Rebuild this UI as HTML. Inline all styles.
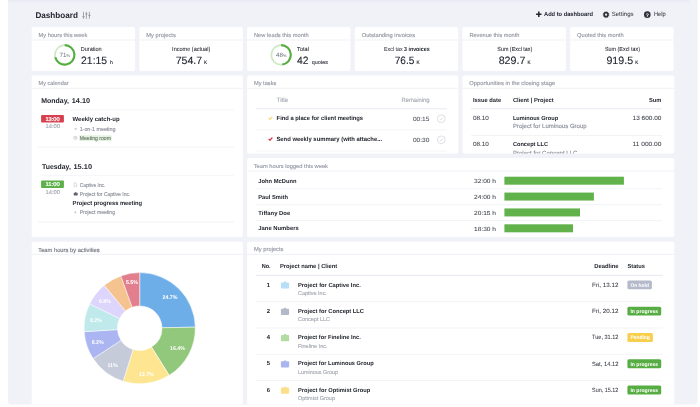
<!DOCTYPE html>
<html lang="en"><head><meta charset="utf-8"><title>Dashboard</title>
<style>
html,body{margin:0;padding:0;background:#fff;}
body{width:700px;height:407px;overflow:hidden;}
svg{display:block;font-family:"Liberation Sans", Arial, sans-serif;filter:blur(0.35px);}
text{white-space:pre;}
</style></head><body>
<svg width="700" height="407" viewBox="0 0 700 407" text-rendering="geometricPrecision">
<rect x="0" y="0" width="700" height="407" fill="#ffffff"/>
<path d="M8 0H697.5V401.5a3 3 0 0 1-3 3H11a3 3 0 0 1-3-3Z" fill="#f1f2f8"/>
<rect x="8" y="0" width="681" height="2.2" fill="#eaecf3"/>
<text x="35.40" y="17.90" font-size="8.3" font-weight="700" fill="#23262f" textLength="42.60" lengthAdjust="spacingAndGlyphs" >Dashboard</text>
<line x1="83.5" y1="11.8" x2="83.5" y2="18.8" stroke="#8f929c" stroke-width="0.8"/>
<line x1="82.4" y1="16.6" x2="84.6" y2="16.6" stroke="#8f929c" stroke-width="0.9"/>
<line x1="86.4" y1="11.8" x2="86.4" y2="18.8" stroke="#8f929c" stroke-width="0.8"/>
<line x1="85.30000000000001" y1="14.0" x2="87.5" y2="14.0" stroke="#8f929c" stroke-width="0.9"/>
<line x1="89.4" y1="11.8" x2="89.4" y2="18.8" stroke="#8f929c" stroke-width="0.8"/>
<line x1="88.30000000000001" y1="15.4" x2="90.5" y2="15.4" stroke="#8f929c" stroke-width="0.9"/>
<path d="M536.1 14.3H541.5M538.8 11.6V17" stroke="#23262f" stroke-width="1.5" fill="none"/>
<text x="544.00" y="16.40" font-size="6.0" font-weight="700" fill="#23262f" textLength="48.90" lengthAdjust="spacingAndGlyphs" >Add to dashboard</text>
<circle cx="606.05" cy="14.65" r="1.95" fill="none" stroke="#2f323b" stroke-width="1.7"/>
<circle cx="606.05" cy="14.65" r="2.9" fill="none" stroke="#2f323b" stroke-width="0.6" stroke-dasharray="1.14 1.14"/>
<text x="611.70" y="16.40" font-size="6.1" font-weight="400" fill="#3d4049" textLength="21.90" lengthAdjust="spacingAndGlyphs"  stroke="#3d4049" stroke-width="0.05">Settings</text>
<circle cx="647.3" cy="14.65" r="3.3" fill="#2f323b"/>
<text x="647.30" y="16.50" font-size="5.2" font-weight="700" fill="#ffffff" text-anchor="middle" >?</text>
<text x="653.90" y="16.40" font-size="6.1" font-weight="400" fill="#3d4049" textLength="11.80" lengthAdjust="spacingAndGlyphs"  stroke="#3d4049" stroke-width="0.05">Help</text>
<rect x="31.70" y="27.00" width="103.40" height="44.00" rx="2" fill="#ffffff" />
<line x1="31.70" y1="40.00" x2="135.10" y2="40.00" stroke="#e9ebf2" stroke-width="0.7"/>
<text x="38.60" y="36.90" font-size="5.7" font-weight="400" fill="#9396a1" textLength="48.80" lengthAdjust="spacingAndGlyphs"  stroke="#9396a1" stroke-width="0.13">My hours this week</text>
<rect x="139.40" y="27.00" width="103.40" height="44.00" rx="2" fill="#ffffff" />
<line x1="139.40" y1="40.00" x2="242.80" y2="40.00" stroke="#e9ebf2" stroke-width="0.7"/>
<text x="146.30" y="36.90" font-size="5.7" font-weight="400" fill="#9396a1" textLength="29.50" lengthAdjust="spacingAndGlyphs"  stroke="#9396a1" stroke-width="0.13">My projects</text>
<rect x="247.10" y="27.00" width="103.40" height="44.00" rx="2" fill="#ffffff" />
<line x1="247.10" y1="40.00" x2="350.50" y2="40.00" stroke="#e9ebf2" stroke-width="0.7"/>
<text x="254.00" y="36.90" font-size="5.7" font-weight="400" fill="#9396a1" textLength="54.60" lengthAdjust="spacingAndGlyphs"  stroke="#9396a1" stroke-width="0.13">New leads this month</text>
<rect x="354.80" y="27.00" width="103.40" height="44.00" rx="2" fill="#ffffff" />
<line x1="354.80" y1="40.00" x2="458.20" y2="40.00" stroke="#e9ebf2" stroke-width="0.7"/>
<text x="361.70" y="36.90" font-size="5.7" font-weight="400" fill="#9396a1" textLength="53.50" lengthAdjust="spacingAndGlyphs"  stroke="#9396a1" stroke-width="0.13">Outstanding invoices</text>
<rect x="462.50" y="27.00" width="103.40" height="44.00" rx="2" fill="#ffffff" />
<line x1="462.50" y1="40.00" x2="565.90" y2="40.00" stroke="#e9ebf2" stroke-width="0.7"/>
<text x="469.40" y="36.90" font-size="5.7" font-weight="400" fill="#9396a1" textLength="50.00" lengthAdjust="spacingAndGlyphs"  stroke="#9396a1" stroke-width="0.13">Revenue this month</text>
<rect x="570.20" y="27.00" width="103.40" height="44.00" rx="2" fill="#ffffff" />
<line x1="570.20" y1="40.00" x2="673.60" y2="40.00" stroke="#e9ebf2" stroke-width="0.7"/>
<text x="577.10" y="36.90" font-size="5.7" font-weight="400" fill="#9396a1" textLength="46.50" lengthAdjust="spacingAndGlyphs"  stroke="#9396a1" stroke-width="0.13">Quoted this month</text>
<circle cx="64.7" cy="54.9" r="9.75" fill="none" stroke="#cfe9c7" stroke-width="1.7"/>
<path d="M64.7 45.15A9.75 9.75 0 1 1 55.26 57.32" fill="none" stroke="#56ad42" stroke-width="2.1"/>
<text x="64.9" y="57.0" font-size="6.2" fill="#6c6f7a" text-anchor="middle">71<tspan font-size="4.2">%</tspan></text>
<text x="80.70" y="50.70" font-size="5.9" font-weight="400" fill="#23262f" textLength="21.00" lengthAdjust="spacingAndGlyphs"  stroke="#23262f" stroke-width="0.05">Duration</text>
<text x="81.10" y="63.60" font-size="10.6" font-weight="500" fill="#23262f" textLength="26.00" lengthAdjust="spacingAndGlyphs" stroke="#23262f" stroke-width="0.1">21:15</text>
<text x="110.00" y="63.60" font-size="5.0" font-weight="400" fill="#23262f" textLength="2.80" lengthAdjust="spacingAndGlyphs" stroke="#23262f" stroke-width="0.12">h</text>
<text x="172.10" y="50.70" font-size="5.9" font-weight="400" fill="#23262f" textLength="38.20" lengthAdjust="spacingAndGlyphs"  stroke="#23262f" stroke-width="0.05">Income (actual)</text>
<text x="175.70" y="63.60" font-size="10.6" font-weight="500" fill="#23262f" textLength="26.40" lengthAdjust="spacingAndGlyphs" stroke="#23262f" stroke-width="0.1">754.7</text>
<text x="204.00" y="63.60" font-size="5.0" font-weight="400" fill="#23262f" textLength="3.10" lengthAdjust="spacingAndGlyphs" stroke="#23262f" stroke-width="0.12">K</text>
<circle cx="281.1" cy="54.9" r="9.75" fill="none" stroke="#cfe9c7" stroke-width="1.7"/>
<path d="M281.1 45.15A9.75 9.75 0 0 1 282.32 64.57" fill="none" stroke="#56ad42" stroke-width="2.1"/>
<text x="281.3" y="57.0" font-size="6.2" fill="#6c6f7a" text-anchor="middle">48<tspan font-size="4.2">%</tspan></text>
<text x="297.10" y="50.70" font-size="5.9" font-weight="400" fill="#23262f" textLength="11.80" lengthAdjust="spacingAndGlyphs"  stroke="#23262f" stroke-width="0.05">Total</text>
<text x="297.10" y="63.60" font-size="10.6" font-weight="500" fill="#23262f" textLength="11.50" lengthAdjust="spacingAndGlyphs" stroke="#23262f" stroke-width="0.1">42</text>
<text x="311.70" y="63.60" font-size="5.3" font-weight="400" fill="#23262f" textLength="16.20" lengthAdjust="spacingAndGlyphs" stroke="#23262f" stroke-width="0.08">quotes</text>
<text x="384" y="50.7" font-size="5.9" fill="#23262f" textLength="45.7" lengthAdjust="spacingAndGlyphs">Excl tax <tspan font-weight="700">3 invoices</tspan></text>
<text x="394.70" y="63.60" font-size="10.6" font-weight="500" fill="#23262f" textLength="19.60" lengthAdjust="spacingAndGlyphs" stroke="#23262f" stroke-width="0.1">76.5</text>
<text x="416.40" y="63.60" font-size="5.0" font-weight="400" fill="#23262f" textLength="3.20" lengthAdjust="spacingAndGlyphs" stroke="#23262f" stroke-width="0.12">K</text>
<text x="497.30" y="50.70" font-size="5.9" font-weight="400" fill="#23262f" textLength="35.00" lengthAdjust="spacingAndGlyphs"  stroke="#23262f" stroke-width="0.05">Sum (Excl tax)</text>
<text x="498.70" y="63.60" font-size="10.6" font-weight="500" fill="#23262f" textLength="26.70" lengthAdjust="spacingAndGlyphs" stroke="#23262f" stroke-width="0.1">829.7</text>
<text x="527.60" y="63.60" font-size="5.0" font-weight="400" fill="#23262f" textLength="3.10" lengthAdjust="spacingAndGlyphs" stroke="#23262f" stroke-width="0.12">K</text>
<text x="605.00" y="50.70" font-size="5.9" font-weight="400" fill="#23262f" textLength="35.00" lengthAdjust="spacingAndGlyphs"  stroke="#23262f" stroke-width="0.05">Sum (Excl tax)</text>
<text x="606.40" y="63.60" font-size="10.6" font-weight="500" fill="#23262f" textLength="26.70" lengthAdjust="spacingAndGlyphs" stroke="#23262f" stroke-width="0.1">919.5</text>
<text x="635.30" y="63.60" font-size="5.0" font-weight="400" fill="#23262f" textLength="3.10" lengthAdjust="spacingAndGlyphs" stroke="#23262f" stroke-width="0.12">K</text>
<rect x="31.70" y="75.40" width="211.20" height="161.70" rx="2" fill="#ffffff" />
<line x1="31.70" y1="88.30" x2="242.90" y2="88.30" stroke="#e9ebf2" stroke-width="0.7"/>
<text x="38.60" y="84.70" font-size="5.7" font-weight="400" fill="#9396a1" textLength="30.00" lengthAdjust="spacingAndGlyphs"  stroke="#9396a1" stroke-width="0.13">My calendar</text>
<text x="41.30" y="103.00" font-size="7.1" font-weight="700" fill="#23262f" textLength="27.70" lengthAdjust="spacingAndGlyphs" >Monday,</text>
<text x="71.80" y="103.00" font-size="7.1" font-weight="700" fill="#23262f" textLength="18.20" lengthAdjust="spacingAndGlyphs" >14.10</text>
<line x1="41.10" y1="109.90" x2="234.00" y2="109.90" stroke="#eceef3" stroke-width="0.6"/>
<rect x="41.10" y="115.10" width="22.80" height="7.50" rx="0.8" fill="#d8404f" />
<text x="45.40" y="120.80" font-size="5.5" font-weight="400" fill="#ffffff" textLength="14.30" lengthAdjust="spacingAndGlyphs" stroke="#fff" stroke-width="0.22">13:00</text>
<text x="45.40" y="128.30" font-size="5.6" font-weight="400" fill="#a6a9b3" textLength="14.60" lengthAdjust="spacingAndGlyphs"  stroke="#a6a9b3" stroke-width="0.13">14:00</text>
<text x="72.60" y="121.10" font-size="6.0" font-weight="700" fill="#23262f" textLength="47.00" lengthAdjust="spacingAndGlyphs" >Weekly catch-up</text>
<path d="M74.6 128.9H76.8M75.7 127.8V130" stroke="#9a9da8" stroke-width="0.45" fill="none"/>
<text x="79.70" y="130.70" font-size="5.6" font-weight="400" fill="#8b8e99" textLength="35.70" lengthAdjust="spacingAndGlyphs"  stroke="#8b8e99" stroke-width="0.13">1-on-1 meeting</text>
<circle cx="75.4" cy="137.9" r="1.6" fill="none" stroke="#9a9da8" stroke-width="0.45"/>
<path d="M75.4 137V138H76.1" stroke="#9a9da8" stroke-width="0.4" fill="none"/>
<rect x="79.00" y="135.30" width="32.70" height="5.80" rx="0.8" fill="#e4f3de" />
<text x="79.70" y="139.60" font-size="5.6" font-weight="400" fill="#6f7a72" textLength="31.30" lengthAdjust="spacingAndGlyphs"  stroke="#6f7a72" stroke-width="0.13">Meeting room</text>
<line x1="38.00" y1="147.10" x2="234.00" y2="147.10" stroke="#e9ebf2" stroke-width="0.6"/>
<text x="42.00" y="168.50" font-size="7.1" font-weight="700" fill="#23262f" textLength="28.80" lengthAdjust="spacingAndGlyphs" >Tuesday,</text>
<text x="73.50" y="168.50" font-size="7.1" font-weight="700" fill="#23262f" textLength="18.50" lengthAdjust="spacingAndGlyphs" >15.10</text>
<line x1="41.10" y1="175.40" x2="234.00" y2="175.40" stroke="#eceef3" stroke-width="0.6"/>
<rect x="41.10" y="180.50" width="22.80" height="7.60" rx="0.8" fill="#5bb048" />
<text x="45.50" y="186.10" font-size="5.5" font-weight="400" fill="#ffffff" textLength="14.30" lengthAdjust="spacingAndGlyphs" stroke="#fff" stroke-width="0.22">11:00</text>
<text x="45.40" y="193.60" font-size="5.6" font-weight="400" fill="#a6a9b3" textLength="14.60" lengthAdjust="spacingAndGlyphs"  stroke="#a6a9b3" stroke-width="0.13">14:00</text>
<path d="M74.2 182.9H76.0L76.8 183.7V186.4H74.2Z" fill="none" stroke="#a3a6b0" stroke-width="0.4"/>
<text x="79.70" y="186.60" font-size="5.6" font-weight="400" fill="#8b8e99" textLength="25.70" lengthAdjust="spacingAndGlyphs"  stroke="#8b8e99" stroke-width="0.13">Captive Inc.</text>
<rect x="73.7" y="192.7" width="4.0" height="2.8" rx="0.4" fill="#62656f"/><rect x="75.0" y="192.2" width="1.4" height="0.7" fill="#62656f"/>
<text x="79.70" y="195.70" font-size="5.6" font-weight="400" fill="#8b8e99" textLength="50.70" lengthAdjust="spacingAndGlyphs"  stroke="#8b8e99" stroke-width="0.13">Project for Captive Inc.</text>
<text x="72.60" y="204.70" font-size="6.0" font-weight="700" fill="#23262f" textLength="69.50" lengthAdjust="spacingAndGlyphs" >Project progress meeting</text>
<path d="M74.4 212.3H76.4M75.4 211.3V213.3" stroke="#9a9da8" stroke-width="0.45" fill="none"/>
<text x="79.70" y="213.90" font-size="5.6" font-weight="400" fill="#8b8e99" textLength="35.30" lengthAdjust="spacingAndGlyphs"  stroke="#8b8e99" stroke-width="0.13">Project meeting</text>
<line x1="38.00" y1="222.00" x2="234.00" y2="222.00" stroke="#e9ebf2" stroke-width="0.6"/>
<rect x="247.10" y="75.40" width="211.20" height="78.20" rx="2" fill="#ffffff" />
<line x1="247.10" y1="88.30" x2="458.30" y2="88.30" stroke="#e9ebf2" stroke-width="0.7"/>
<text x="254.00" y="84.70" font-size="5.7" font-weight="400" fill="#9396a1" textLength="22.30" lengthAdjust="spacingAndGlyphs"  stroke="#9396a1" stroke-width="0.13">My tasks</text>
<text x="276.60" y="101.60" font-size="6.2" font-weight="400" fill="#a6a9b3" textLength="11.50" lengthAdjust="spacingAndGlyphs"  stroke="#a6a9b3" stroke-width="0.13">Title</text>
<text x="401.40" y="101.60" font-size="6.2" font-weight="400" fill="#a6a9b3" textLength="28.20" lengthAdjust="spacingAndGlyphs"  stroke="#a6a9b3" stroke-width="0.13">Remaining</text>
<line x1="255.90" y1="108.80" x2="446.90" y2="108.80" stroke="#dfe2ee" stroke-width="0.8"/>
<path d="M268.60 118.10L270.00 119.40L272.30 116.70" fill="none" stroke="#f8d872" stroke-width="1.2" stroke-linejoin="round"/>
<text x="276.60" y="120.20" font-size="6.0" font-weight="700" fill="#23262f" textLength="86.50" lengthAdjust="spacingAndGlyphs" >Find a place for client meetings</text>
<text x="412.90" y="120.60" font-size="6.2" font-weight="400" fill="#4b4e58" textLength="16.40" lengthAdjust="spacingAndGlyphs"  stroke="#4b4e58" stroke-width="0.05">00:15</text>
<circle cx="441.3" cy="118.7" r="3.9" fill="none" stroke="#c3c6cf" stroke-width="0.55"/>
<path d="M439.70 118.80L440.80 119.90L443.00 117.40" fill="none" stroke="#c3c6cf" stroke-width="0.55"/>
<line x1="255.90" y1="129.80" x2="446.90" y2="129.80" stroke="#eceef3" stroke-width="0.6"/>
<path d="M268.70 138.90L270.10 140.20L272.40 137.50" fill="none" stroke="#dc3d4b" stroke-width="1.3" stroke-linejoin="round"/>
<text x="276.40" y="141.30" font-size="6.0" font-weight="700" fill="#23262f" textLength="105.70" lengthAdjust="spacingAndGlyphs" >Send weekly summary (with attache...</text>
<text x="412.90" y="141.70" font-size="6.2" font-weight="400" fill="#4b4e58" textLength="16.40" lengthAdjust="spacingAndGlyphs"  stroke="#4b4e58" stroke-width="0.05">00:30</text>
<circle cx="441.3" cy="139.8" r="3.9" fill="none" stroke="#c3c6cf" stroke-width="0.55"/>
<path d="M439.70 139.90L440.80 141.00L443.00 138.50" fill="none" stroke="#c3c6cf" stroke-width="0.55"/>
<line x1="255.90" y1="151.00" x2="446.90" y2="151.00" stroke="#eceef3" stroke-width="0.6"/>
<clipPath id="opc"><rect x="462.5" y="75.4" width="211.8" height="78.2" rx="2"/></clipPath>
<rect x="462.50" y="75.40" width="211.80" height="78.20" rx="2" fill="#ffffff" />
<line x1="462.50" y1="88.30" x2="674.30" y2="88.30" stroke="#e9ebf2" stroke-width="0.7"/>
<text x="469.30" y="84.70" font-size="5.7" font-weight="400" fill="#9396a1" textLength="86.00" lengthAdjust="spacingAndGlyphs"  stroke="#9396a1" stroke-width="0.13">Opportunities in the closing stage</text>
<text x="472.90" y="101.70" font-size="5.9" font-weight="700" fill="#23262f" textLength="28.20" lengthAdjust="spacingAndGlyphs" >Issue date</text>
<text x="512.90" y="101.70" font-size="5.9" font-weight="700" fill="#23262f" textLength="40.70" lengthAdjust="spacingAndGlyphs" >Client | Project</text>
<text x="649.00" y="101.70" font-size="5.9" font-weight="700" fill="#23262f" textLength="12.40" lengthAdjust="spacingAndGlyphs" >Sum</text>
<line x1="471.10" y1="108.80" x2="662.00" y2="108.80" stroke="#dfe2ee" stroke-width="0.8"/>
<text x="473.00" y="120.00" font-size="6.2" font-weight="400" fill="#3d4049" textLength="15.90" lengthAdjust="spacingAndGlyphs"  stroke="#3d4049" stroke-width="0.05">08.10</text>
<text x="512.90" y="119.80" font-size="5.9" font-weight="700" fill="#23262f" textLength="45.20" lengthAdjust="spacingAndGlyphs" >Luminous Group</text>
<text x="512.90" y="128.40" font-size="6.0" font-weight="400" fill="#8b8e99" textLength="73.80" lengthAdjust="spacingAndGlyphs"  stroke="#8b8e99" stroke-width="0.13">Project for Luminous Group</text>
<text x="632.60" y="120.00" font-size="6.2" font-weight="400" fill="#3d4049" textLength="28.80" lengthAdjust="spacingAndGlyphs"  stroke="#3d4049" stroke-width="0.05">13 600.00</text>
<line x1="471.10" y1="135.50" x2="662.00" y2="135.50" stroke="#e9ebf2" stroke-width="0.6"/>
<g clip-path="url(#opc)">
<text x="473.00" y="146.10" font-size="6.2" font-weight="400" fill="#3d4049" textLength="15.90" lengthAdjust="spacingAndGlyphs"  stroke="#3d4049" stroke-width="0.05">08.10</text>
<text x="512.90" y="146.00" font-size="5.9" font-weight="700" fill="#23262f" textLength="35.10" lengthAdjust="spacingAndGlyphs" >Concept LLC</text>
<text x="512.90" y="154.70" font-size="6.0" font-weight="400" fill="#8b8e99" textLength="64.50" lengthAdjust="spacingAndGlyphs"  stroke="#8b8e99" stroke-width="0.13">Project for Concept LLC</text>
<text x="632.60" y="146.10" font-size="6.2" font-weight="400" fill="#3d4049" textLength="28.80" lengthAdjust="spacingAndGlyphs"  stroke="#3d4049" stroke-width="0.05">11 000.00</text>
</g>
<rect x="247.10" y="157.90" width="427.20" height="79.20" rx="2" fill="#ffffff" />
<line x1="247.10" y1="171.10" x2="674.30" y2="171.10" stroke="#e9ebf2" stroke-width="0.7"/>
<text x="253.70" y="167.90" font-size="5.6" font-weight="400" fill="#9699a5" textLength="74.30" lengthAdjust="spacingAndGlyphs"  stroke="#9699a5" stroke-width="0.13">Team hours logged this week</text>
<text x="258.30" y="182.90" font-size="5.9" font-weight="700" fill="#23262f" textLength="38.20" lengthAdjust="spacingAndGlyphs" >John McDunn</text>
<text x="474.10" y="183.10" font-size="5.9" font-weight="400" fill="#3d4049" textLength="21.90" lengthAdjust="spacingAndGlyphs"  stroke="#3d4049" stroke-width="0.05">32:00 h</text>
<rect x="504.40" y="176.70" width="119.50" height="8.00" rx="0" fill="#62b24c" />
<line x1="255.90" y1="188.80" x2="662.00" y2="188.80" stroke="#e9ebf2" stroke-width="0.6"/>
<text x="258.30" y="198.73" font-size="5.9" font-weight="700" fill="#23262f" textLength="29.60" lengthAdjust="spacingAndGlyphs" >Paul Smith</text>
<text x="474.10" y="198.93" font-size="5.9" font-weight="400" fill="#3d4049" textLength="21.90" lengthAdjust="spacingAndGlyphs"  stroke="#3d4049" stroke-width="0.05">24:00 h</text>
<rect x="504.40" y="192.57" width="89.50" height="8.00" rx="0" fill="#62b24c" />
<line x1="255.90" y1="204.70" x2="662.00" y2="204.70" stroke="#e9ebf2" stroke-width="0.6"/>
<text x="258.30" y="214.56" font-size="5.9" font-weight="700" fill="#23262f" textLength="31.90" lengthAdjust="spacingAndGlyphs" >Tiffany Doe</text>
<text x="474.10" y="214.76" font-size="5.9" font-weight="400" fill="#3d4049" textLength="21.90" lengthAdjust="spacingAndGlyphs"  stroke="#3d4049" stroke-width="0.05">20:15 h</text>
<rect x="504.40" y="208.44" width="75.60" height="8.00" rx="0" fill="#62b24c" />
<line x1="255.90" y1="220.60" x2="662.00" y2="220.60" stroke="#e9ebf2" stroke-width="0.6"/>
<text x="258.30" y="230.39" font-size="5.9" font-weight="700" fill="#23262f" textLength="40.40" lengthAdjust="spacingAndGlyphs" >Jane Numbers</text>
<text x="474.10" y="230.59" font-size="5.9" font-weight="400" fill="#3d4049" textLength="21.90" lengthAdjust="spacingAndGlyphs"  stroke="#3d4049" stroke-width="0.05">18:30 h</text>
<rect x="504.40" y="224.31" width="68.60" height="8.00" rx="0" fill="#62b24c" />
<rect x="31.70" y="241.70" width="211.20" height="162.50" rx="2" fill="#ffffff" />
<line x1="31.70" y1="254.40" x2="242.90" y2="254.40" stroke="#e9ebf2" stroke-width="0.7"/>
<text x="38.30" y="251.50" font-size="5.8" font-weight="400" fill="#6f727d" textLength="61.40" lengthAdjust="spacingAndGlyphs"  stroke="#6f727d" stroke-width="0.13">Team hours by activities</text>
<path d="M139.70 272.60A55.6 55.6 0 0 1 195.29 327.15L162.00 327.78A22.3 22.3 0 0 0 139.70 305.90Z" fill="#6eaee8" stroke="#ffffff" stroke-width="0.5"/>
<path d="M195.29 327.15A55.6 55.6 0 0 1 169.20 375.33L151.53 347.10A22.3 22.3 0 0 0 162.00 327.78Z" fill="#92c87c" stroke="#ffffff" stroke-width="0.5"/>
<path d="M169.20 375.33A55.6 55.6 0 0 1 123.18 381.29L133.08 349.49A22.3 22.3 0 0 0 151.53 347.10Z" fill="#fde591" stroke="#ffffff" stroke-width="0.5"/>
<path d="M123.18 381.29A55.6 55.6 0 0 1 93.13 358.58L121.02 340.38A22.3 22.3 0 0 0 133.08 349.49Z" fill="#c6cbd9" stroke="#ffffff" stroke-width="0.5"/>
<path d="M93.13 358.58A55.6 55.6 0 0 1 84.21 331.69L117.44 329.60A22.3 22.3 0 0 0 121.02 340.38Z" fill="#aab5f2" stroke="#ffffff" stroke-width="0.5"/>
<path d="M84.21 331.69A55.6 55.6 0 0 1 89.69 303.90L119.64 318.45A22.3 22.3 0 0 0 117.44 329.60Z" fill="#bfe9ea" stroke="#ffffff" stroke-width="0.5"/>
<path d="M89.69 303.90A55.6 55.6 0 0 1 104.26 285.36L125.49 311.02A22.3 22.3 0 0 0 119.64 318.45Z" fill="#ddd5fb" stroke="#ffffff" stroke-width="0.5"/>
<path d="M104.26 285.36A55.6 55.6 0 0 1 120.87 275.89L132.15 307.22A22.3 22.3 0 0 0 125.49 311.02Z" fill="#f5c38f" stroke="#ffffff" stroke-width="0.5"/>
<path d="M120.87 275.89A55.6 55.6 0 0 1 139.70 272.60L139.70 305.90A22.3 22.3 0 0 0 132.15 307.22Z" fill="#e27f8e" stroke="#ffffff" stroke-width="0.5"/>
<text x="170.00" y="299.30" font-size="5.3" font-weight="700" fill="#ffffff" text-anchor="middle" >24.7%</text>
<text x="177.50" y="350.30" font-size="5.3" font-weight="700" fill="#ffffff" text-anchor="middle" >16.4%</text>
<text x="146.30" y="376.40" font-size="5.3" font-weight="700" fill="#ffffff" text-anchor="middle" >13.7%</text>
<text x="112.60" y="366.50" font-size="5.3" font-weight="700" fill="#ffffff" text-anchor="middle" >11%</text>
<text x="97.70" y="344.10" font-size="5.3" font-weight="700" fill="#ffffff" text-anchor="middle" >8.2%</text>
<text x="96.00" y="321.60" font-size="5.3" font-weight="700" fill="#ffffff" text-anchor="middle" >8.2%</text>
<text x="105.00" y="302.70" font-size="5.3" font-weight="700" fill="#ffffff" text-anchor="middle" >6.8%</text>
<text x="132.00" y="284.10" font-size="5.3" font-weight="700" fill="#ffffff" text-anchor="middle" >5.5%</text>
<rect x="247.10" y="241.70" width="427.20" height="162.50" rx="2" fill="#ffffff" />
<line x1="247.10" y1="254.40" x2="674.30" y2="254.40" stroke="#e9ebf2" stroke-width="0.7"/>
<text x="254.00" y="251.10" font-size="5.7" font-weight="400" fill="#9396a1" textLength="29.50" lengthAdjust="spacingAndGlyphs"  stroke="#9396a1" stroke-width="0.13">My projects</text>
<text x="261.70" y="268.10" font-size="5.9" font-weight="700" fill="#23262f" textLength="8.90" lengthAdjust="spacingAndGlyphs" >No.</text>
<text x="279.90" y="268.10" font-size="5.9" font-weight="700" fill="#23262f" textLength="57.40" lengthAdjust="spacingAndGlyphs" >Project name | Client</text>
<text x="594.30" y="268.10" font-size="5.9" font-weight="700" fill="#23262f" textLength="24.30" lengthAdjust="spacingAndGlyphs" >Deadline</text>
<text x="627.40" y="268.10" font-size="5.9" font-weight="700" fill="#23262f" textLength="17.60" lengthAdjust="spacingAndGlyphs" >Status</text>
<line x1="255.90" y1="275.40" x2="662.60" y2="275.40" stroke="#dfe2ee" stroke-width="0.8"/>
<text x="270.10" y="286.50" font-size="5.9" font-weight="700" fill="#23262f" text-anchor="end" >1</text>
<rect x="280.90" y="282.40" width="8.2" height="6.2" rx="1" fill="#b9def6"/><rect x="283.80" y="281.50" width="2.4" height="1.4" rx="0.4" fill="#b9def6"/>
<text x="298.00" y="286.50" font-size="5.9" font-weight="700" fill="#23262f" textLength="62.80" lengthAdjust="spacingAndGlyphs" >Project for Captive Inc.</text>
<text x="298.00" y="294.90" font-size="5.6" font-weight="400" fill="#a6a9b3" textLength="28.90" lengthAdjust="spacingAndGlyphs"  stroke="#a6a9b3" stroke-width="0.13">Captive Inc.</text>
<text x="592.00" y="286.80" font-size="6.0" font-weight="400" fill="#3d4049" textLength="26.40" lengthAdjust="spacingAndGlyphs"  stroke="#3d4049" stroke-width="0.05">Fri, 13.12</text>
<rect x="627.40" y="280.40" width="24.50" height="8.90" rx="1.5" fill="#b5bacb" />
<text x="630.40" y="286.75" font-size="5.2" font-weight="700" fill="#ffffff" textLength="18.50" lengthAdjust="spacingAndGlyphs" >On hold</text>
<line x1="255.90" y1="301.70" x2="662.60" y2="301.70" stroke="#e9ebf2" stroke-width="0.6"/>
<text x="270.10" y="312.80" font-size="5.9" font-weight="700" fill="#23262f" text-anchor="end" >2</text>
<rect x="280.90" y="308.70" width="8.2" height="6.2" rx="1" fill="#b4b9c9"/><rect x="283.80" y="307.80" width="2.4" height="1.4" rx="0.4" fill="#b4b9c9"/>
<text x="298.00" y="312.80" font-size="5.9" font-weight="700" fill="#23262f" textLength="66.00" lengthAdjust="spacingAndGlyphs" >Project for Concept LLC</text>
<text x="298.00" y="321.20" font-size="5.6" font-weight="400" fill="#a6a9b3" textLength="32.00" lengthAdjust="spacingAndGlyphs"  stroke="#a6a9b3" stroke-width="0.13">Concept LLC</text>
<text x="592.00" y="313.10" font-size="6.0" font-weight="400" fill="#3d4049" textLength="26.40" lengthAdjust="spacingAndGlyphs"  stroke="#3d4049" stroke-width="0.05">Fri, 20.12</text>
<rect x="627.40" y="306.70" width="33.80" height="8.90" rx="1.5" fill="#57ad43" />
<text x="630.40" y="313.05" font-size="5.2" font-weight="700" fill="#ffffff" textLength="27.80" lengthAdjust="spacingAndGlyphs" >In progress</text>
<line x1="255.90" y1="328.00" x2="662.60" y2="328.00" stroke="#e9ebf2" stroke-width="0.6"/>
<text x="270.10" y="339.10" font-size="5.9" font-weight="700" fill="#23262f" text-anchor="end" >4</text>
<rect x="280.90" y="335.00" width="8.2" height="6.2" rx="1" fill="#b3dca2"/><rect x="283.80" y="334.10" width="2.4" height="1.4" rx="0.4" fill="#b3dca2"/>
<text x="298.00" y="339.10" font-size="5.9" font-weight="700" fill="#23262f" textLength="62.80" lengthAdjust="spacingAndGlyphs" >Project for Fineline Inc.</text>
<text x="298.00" y="347.50" font-size="5.6" font-weight="400" fill="#a6a9b3" textLength="29.50" lengthAdjust="spacingAndGlyphs"  stroke="#a6a9b3" stroke-width="0.13">Fineline Inc.</text>
<text x="592.00" y="339.40" font-size="6.0" font-weight="400" fill="#3d4049" textLength="26.40" lengthAdjust="spacingAndGlyphs"  stroke="#3d4049" stroke-width="0.05">Tue, 31.12</text>
<rect x="627.40" y="333.00" width="25.50" height="8.90" rx="1.5" fill="#f7cf4d" />
<text x="630.40" y="339.35" font-size="5.2" font-weight="700" fill="#ffffff" textLength="19.50" lengthAdjust="spacingAndGlyphs" >Pending</text>
<line x1="255.90" y1="354.30" x2="662.60" y2="354.30" stroke="#e9ebf2" stroke-width="0.6"/>
<text x="270.10" y="365.40" font-size="5.9" font-weight="700" fill="#23262f" text-anchor="end" >5</text>
<rect x="280.90" y="361.30" width="8.2" height="6.2" rx="1" fill="#a9b4f0"/><rect x="283.80" y="360.40" width="2.4" height="1.4" rx="0.4" fill="#a9b4f0"/>
<text x="298.00" y="365.40" font-size="5.9" font-weight="700" fill="#23262f" textLength="75.60" lengthAdjust="spacingAndGlyphs" >Project for Luminous Group</text>
<text x="298.00" y="373.80" font-size="5.6" font-weight="400" fill="#a6a9b3" textLength="40.00" lengthAdjust="spacingAndGlyphs"  stroke="#a6a9b3" stroke-width="0.13">Luminous Group</text>
<text x="592.00" y="365.70" font-size="6.0" font-weight="400" fill="#3d4049" textLength="26.40" lengthAdjust="spacingAndGlyphs"  stroke="#3d4049" stroke-width="0.05">Sat, 14.12</text>
<rect x="627.40" y="359.30" width="33.80" height="8.90" rx="1.5" fill="#57ad43" />
<text x="630.40" y="365.65" font-size="5.2" font-weight="700" fill="#ffffff" textLength="27.80" lengthAdjust="spacingAndGlyphs" >In progress</text>
<line x1="255.90" y1="380.60" x2="662.60" y2="380.60" stroke="#e9ebf2" stroke-width="0.6"/>
<text x="270.10" y="391.70" font-size="5.9" font-weight="700" fill="#23262f" text-anchor="end" >6</text>
<rect x="280.90" y="387.60" width="8.2" height="6.2" rx="1" fill="#fbe08b"/><rect x="283.80" y="386.70" width="2.4" height="1.4" rx="0.4" fill="#fbe08b"/>
<text x="298.00" y="391.70" font-size="5.9" font-weight="700" fill="#23262f" textLength="72.30" lengthAdjust="spacingAndGlyphs" >Project for Optimist Group</text>
<text x="298.00" y="400.10" font-size="5.6" font-weight="400" fill="#a6a9b3" textLength="37.00" lengthAdjust="spacingAndGlyphs"  stroke="#a6a9b3" stroke-width="0.13">Optimist Group</text>
<text x="592.00" y="392.00" font-size="6.0" font-weight="400" fill="#3d4049" textLength="26.40" lengthAdjust="spacingAndGlyphs"  stroke="#3d4049" stroke-width="0.05">Sun, 15.12</text>
<rect x="627.40" y="385.60" width="33.80" height="8.90" rx="1.5" fill="#57ad43" />
<text x="630.40" y="391.95" font-size="5.2" font-weight="700" fill="#ffffff" textLength="27.80" lengthAdjust="spacingAndGlyphs" >In progress</text>
</svg>
</body></html>
